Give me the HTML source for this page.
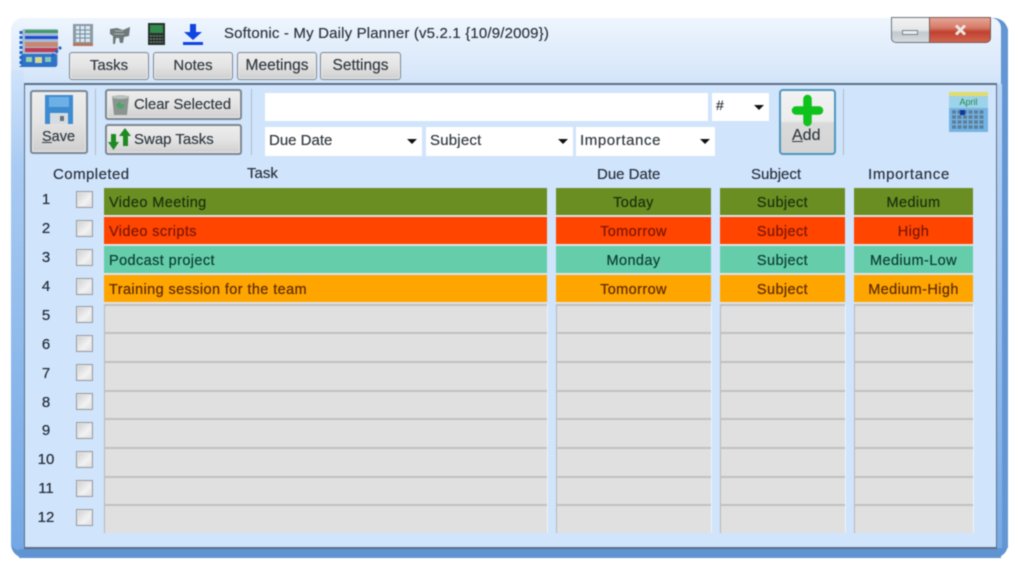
<!DOCTYPE html>
<html><head><meta charset="utf-8">
<style>
html,body{margin:0;padding:0;background:#fff}
#p{position:relative;width:1020px;height:574px;overflow:hidden;background:#fff;font-family:"Liberation Sans",sans-serif;color:#2b3440;font-size:15px;filter:blur(.45px)}
#p div,#p span.a,#p svg{position:absolute}
.t{white-space:nowrap;line-height:18px;text-shadow:0 0 .4px currentColor}
.btn{box-sizing:border-box;border:1px solid #7d8791;border-radius:3px;background:linear-gradient(#ededed 0,#e4e4e4 50%,#cfcfcf 100%);box-shadow:inset 0 0 0 1px #ebebeb;text-align:center;white-space:nowrap;color:#333c44;text-shadow:0 0 .4px currentColor}
.c{box-sizing:border-box;text-align:center;line-height:31px;height:27px;font-size:14.5px;letter-spacing:.4px;white-space:nowrap;box-shadow:0 1px 0 #eee5d5;text-shadow:0 0 .5px currentColor}
.l{box-sizing:border-box;padding-left:5px;line-height:31px;height:27px;font-size:14.5px;letter-spacing:.4px;white-space:nowrap;box-shadow:0 1px 0 #eee5d5;text-shadow:0 0 .5px currentColor}
.e{box-sizing:border-box;height:29px;background:#e0e0e0;border-top:2px solid #c0c0c0;border-left:1px solid #b8b8b8;box-shadow:1px 0 0 #ecf2f8}
.n{width:30px;text-align:center;left:31px;font-size:15px;line-height:18px;color:#26303c;text-shadow:0 0 .5px currentColor}
.k{box-sizing:border-box;left:76px;width:17px;height:17px;border:1px solid #959ba1;background:linear-gradient(135deg,#cfcfcf,#f2f2f2 60%,#dedede);box-shadow:inset 0 0 0 1px #e2e2e2}
.sel{background:#fff;box-sizing:border-box;height:29px;line-height:28px;font-size:15px;padding-left:4px;white-space:nowrap;color:#333c44;text-shadow:0 0 .4px currentColor}
.ar{width:0;height:0;border-left:5px solid transparent;border-right:5px solid transparent;border-top:5px solid #111}
.v{width:1px;background:#aebccb}
.u{text-decoration:underline}
</style></head><body>
<div id="p">
<!-- window -->
<div style="left:11px;top:18px;width:997px;height:540px;border-radius:14px;background:#5f93d2"></div>
<div style="left:11px;top:18px;width:990px;height:530px;border-radius:12px 10px 0 10px;background:linear-gradient(#eef5fd 0,#d6e6fa 60px,#cfe3fb 66px)"></div>
<div style="left:11px;top:70px;width:13px;height:480px;background:linear-gradient(#cfe3fb 0,#a9cbf3 20%,#8cb9ec 60%,#74a8e4 100%);border-radius:0 0 0 8px"></div>
<div style="left:24px;top:83px;width:973px;height:466px;box-sizing:border-box;border:1px solid #5d6f84;border-width:2px 1px 2px 1px;background:#d0e4fc"></div>
<div style="left:997px;top:84px;width:5px;height:464px;background:linear-gradient(#bcd6f6,#76a9e6)"></div>
<div style="left:1002px;top:26px;width:6px;height:522px;background:#6496d4;border-radius:0 4px 0 0"></div>
<div style="left:19px;top:549px;width:982px;height:9px;background:#5f93d2"></div>

<!-- caption buttons -->
<div style="left:891px;top:17px;width:38px;height:26px;box-sizing:border-box;border:1px solid #6d7680;border-right:0;border-radius:0 0 0 5px;background:linear-gradient(#f2f2f2,#e4e7e9 50%,#c3cad0 60%,#d5dade)"></div>
<div style="left:902px;top:30px;width:16px;height:5px;box-sizing:border-box;background:#e9edf0;border:1px solid #7a838c"></div>
<div style="left:929px;top:17px;width:62px;height:26px;box-sizing:border-box;border:1px solid #7c5a55;border-radius:0 0 5px 0;background:linear-gradient(#e6a596,#d67c69 40%,#c0422f 58%,#d06450)"></div>
<svg style="left:954px;top:24px" width="13" height="12" viewBox="0 0 13 12"><path d="M2 1.500L11 10.500M11 1.500L2 10.500" stroke="#ebe6e4" stroke-width="3"/></svg>

<!-- app icon -->
<svg style="left:19px;top:27px" width="44" height="44" viewBox="0 0 44 44">
<rect x="3" y="2" width="36" height="37" rx="2" fill="#a8bcd8"/>
<rect x="6" y="3" width="33" height="3" fill="#3f9a66"/>
<rect x="6" y="9" width="33" height="3" fill="#1e4fd0"/>
<rect x="6" y="15" width="33" height="5" fill="#c9876f"/>
<rect x="6" y="21" width="33" height="4" fill="#c03a52"/>
<rect x="2" y="27" width="36" height="13" rx="2" fill="#2f72c8"/>
<rect x="7" y="30" width="6" height="5" fill="#9bd0a8"/><rect x="16" y="30" width="7" height="6" fill="#d6d894"/><rect x="26" y="30" width="6" height="5" fill="#86c7b8"/>
<path d="M2 4v36M33 29L42 20" stroke="#1f66c2" stroke-width="3" fill="none" stroke-dasharray="3 2"/>
</svg>
<!-- toolbar icons -->
<svg style="left:72px;top:23px" width="22" height="24" viewBox="0 0 22 24"><rect x="1" y="1" width="20" height="22" fill="#8c9aa6"/><rect x="4" y="3" width="14" height="16" fill="#dbe6ee"/><path d="M4 7h14M4 11h14M4 15h14M8 3v16M13 3v16" stroke="#6f8aa0"/><rect x="1" y="20" width="20" height="3" fill="#b5765c"/></svg>
<svg style="left:109px;top:25px" width="22" height="20" viewBox="0 0 22 20"><path d="M1 4L8 3L14 5L21 2L20 11L15 12L14 18H11L10 13H7L6 19H4L4 11L1 9Z" fill="#6d7a78"/><path d="M6 6h8M5 9h10" stroke="#aab4b3"/></svg>
<svg style="left:148px;top:23px" width="17" height="22" viewBox="0 0 17 22"><rect width="17" height="22" fill="#26332c"/><rect x="2" y="2" width="13" height="8" fill="#2f8a4b"/><path d="M2 13h13M2 16h13M2 19h13" stroke="#8b8f8a" stroke-dasharray="2 1"/></svg>
<svg style="left:182px;top:23px" width="22" height="23" viewBox="0 0 22 23"><path d="M8 1h6v8h6L11 17L2 9h6z" fill="#1045e0"/><rect x="1" y="19" width="20" height="3" fill="#1045e0"/></svg>

<div class="t" style="left:224px;top:25px;font-size:15px;color:#2f3842;letter-spacing:.17px">Softonic - My Daily Planner (v5.2.1 {10/9/2009})</div>

<!-- tabs -->
<div class="btn" style="left:69px;top:52px;width:80px;height:28px;line-height:26px;font-size:15px">Tasks</div>
<div class="btn" style="left:153px;top:52px;width:80px;height:28px;line-height:26px;font-size:15px">Notes</div>
<div class="btn" style="left:237px;top:52px;width:80px;height:28px;line-height:26px;font-size:15.5px">Meetings</div>
<div class="btn" style="left:320px;top:52px;width:81px;height:28px;line-height:26px;font-size:15.5px">Settings</div>

<!-- save -->
<div class="btn" style="left:30px;top:90px;width:58px;height:64px;border-width:2px"></div>
<svg style="left:44px;top:95px" width="30" height="29" viewBox="0 0 30 29"><path d="M1 0h28v29H1z" fill="#3f8bd0"/><rect x="5" y="2" width="20" height="10" fill="#6cb0e6"/><rect x="6" y="18" width="18" height="11" fill="#d6dde2"/><rect x="16" y="21" width="4" height="5" fill="#67717a"/></svg>
<div class="t" style="left:42px;top:128px;font-size:14.5px;color:#333c44"><span class="u">S</span>ave</div>
<div class="v" style="left:95px;top:89px;height:66px"></div>

<!-- clear / swap -->
<div class="btn" style="left:105px;top:89px;width:137px;height:31px;border-width:2px"></div>
<svg style="left:111px;top:94px" width="19" height="22" viewBox="0 0 19 22"><path d="M1 2h17l-2 19H3z" fill="#8b9590"/><ellipse cx="9.500" cy="3" rx="8.500" ry="2" fill="#b9c2bc"/><path d="M5 11l4-4 1 3 4 1-3 4-4-1z" fill="#4ea36d"/></svg>
<div class="t" style="left:134px;top:96px;font-size:14.8px;color:#333c44">Clear Selected</div>
<div class="btn" style="left:105px;top:124px;width:137px;height:31px;border-width:2px"></div>
<svg style="left:108px;top:127px" width="24" height="24" viewBox="0 0 24 24"><path d="M3 7h5v8h3l-5.500 8L0 15h3z" fill="#1f8a24"/><path d="M17 1l6 8h-3v10h-5V9h-4z" fill="#1f8a24"/></svg>
<div class="t" style="left:134px;top:131px;font-size:15px;color:#333c44">Swap Tasks</div>
<div class="v" style="left:251px;top:89px;height:66px"></div>

<!-- inputs -->
<div style="left:265px;top:93px;width:443px;height:28px;background:#fff"></div>
<div class="sel" style="left:712px;top:93px;width:57px;height:28px;line-height:24px;font-size:14px">#</div>
<div class="ar" style="left:754px;top:105px"></div>
<div class="sel" style="left:265px;top:127px;width:157px">Due Date</div><div class="ar" style="left:407px;top:139px"></div>
<div class="sel" style="left:426px;top:127px;width:147px;letter-spacing:.2px">Subject</div><div class="ar" style="left:558px;top:139px"></div>
<div class="sel" style="left:576px;top:127px;width:139px;letter-spacing:.6px">Importance</div><div class="ar" style="left:700px;top:139px"></div>

<!-- add -->
<div style="left:779px;top:89px;width:57px;height:66px;box-sizing:border-box;border:2px solid #4f97bd;border-radius:4px;background:linear-gradient(#f2f2f2 0,#ececec 48%,#dadada 52%,#d4d4d4)"></div>
<svg style="left:791px;top:94px" width="33" height="33" viewBox="0 0 33 33"><path d="M16.500 5V28M5 16.500H28" stroke="#0fc21c" stroke-width="8.500" stroke-linecap="round"/></svg>
<div class="t" style="left:792px;top:127px;font-size:16px;color:#333c44"><span class="u">A</span>dd</div>
<div class="v" style="left:843px;top:89px;height:66px"></div>

<!-- calendar -->
<svg style="left:949px;top:92px" width="39" height="40" viewBox="0 0 39 40"><rect width="39" height="40" fill="#74b4e4"/><rect width="39" height="4" fill="#e3dc6a"/><rect y="4" width="39" height="12" fill="#9cd2ea"/><path d="M3 20h33M3 25h33M3 30h33M3 35h33" stroke="#5d7f9a" stroke-width="3.500" stroke-dasharray="4 1.500"/><rect x="11" y="18" width="5" height="5" fill="#10389a"/><text x="19.500" y="13" text-anchor="middle" font-size="9" font-family="Liberation Sans" fill="#1e8a45">April</text></svg>

<!-- headers -->
<div class="t" style="left:53px;top:166px;font-size:15px;letter-spacing:.45px">Completed</div>
<div class="t" style="left:247px;top:165px;font-size:15px">Task</div>
<div class="t" style="left:597px;top:166px;font-size:15px">Due Date</div>
<div class="t" style="left:751px;top:166px;font-size:15px">Subject</div>
<div class="t" style="left:868px;top:166px;font-size:15px;letter-spacing:.7px">Importance</div>

<!-- row numbers -->
<div class="n" style="top:191px">1</div><div class="n" style="top:220px">2</div><div class="n" style="top:249px">3</div><div class="n" style="top:278px">4</div><div class="n" style="top:307px">5</div><div class="n" style="top:336px">6</div><div class="n" style="top:365px">7</div><div class="n" style="top:394px">8</div><div class="n" style="top:422px">9</div><div class="n" style="top:451px">10</div><div class="n" style="top:480px">11</div><div class="n" style="top:509px">12</div>
<!-- checks -->
<div class="k" style="top:191px"></div><div class="k" style="top:220px"></div><div class="k" style="top:249px"></div><div class="k" style="top:278px"></div><div class="k" style="top:306px"></div><div class="k" style="top:335px"></div><div class="k" style="top:364px"></div><div class="k" style="top:393px"></div><div class="k" style="top:422px"></div><div class="k" style="top:451px"></div><div class="k" style="top:480px"></div><div class="k" style="top:509px"></div>

<!-- row 1 -->
<div class="l" style="left:104px;top:188px;width:443px;background:#6b8e23;color:#1a330c">Video Meeting</div>
<div class="c" style="left:556px;top:188px;width:155px;background:#6b8e23;color:#1a330c">Today</div>
<div class="c" style="left:720px;top:188px;width:125px;background:#6b8e23;color:#1a330c">Subject</div>
<div class="c" style="left:854px;top:188px;width:119px;background:#6b8e23;color:#1a330c">Medium</div>
<!-- row 2 -->
<div class="l" style="left:104px;top:217px;width:443px;background:#ff4500;color:#7e1606">Video scripts</div>
<div class="c" style="left:556px;top:217px;width:155px;background:#ff4500;color:#7e1606">Tomorrow</div>
<div class="c" style="left:720px;top:217px;width:125px;background:#ff4500;color:#7e1606">Subject</div>
<div class="c" style="left:854px;top:217px;width:119px;background:#ff4500;color:#7e1606">High</div>
<!-- row 3 -->
<div class="l" style="left:104px;top:246px;width:443px;background:#66cdaa;color:#0c4235">Podcast project</div>
<div class="c" style="left:556px;top:246px;width:155px;background:#66cdaa;color:#0c4235">Monday</div>
<div class="c" style="left:720px;top:246px;width:125px;background:#66cdaa;color:#0c4235">Subject</div>
<div class="c" style="left:854px;top:246px;width:119px;background:#66cdaa;color:#0c4235">Medium-Low</div>
<!-- row 4 -->
<div class="l" style="left:104px;top:275px;width:443px;background:#ffa500;color:#602c00">Training session for the team</div>
<div class="c" style="left:556px;top:275px;width:155px;background:#ffa500;color:#602c00">Tomorrow</div>
<div class="c" style="left:720px;top:275px;width:125px;background:#ffa500;color:#602c00">Subject</div>
<div class="c" style="left:854px;top:275px;width:119px;background:#ffa500;color:#602c00">Medium-High</div>

<!-- empty rows -->
<div class="e" style="left:104px;top:304px;width:443px"></div><div class="e" style="left:556px;top:304px;width:155px"></div><div class="e" style="left:720px;top:304px;width:125px"></div><div class="e" style="left:854px;top:304px;width:119px"></div>
<div class="e" style="left:104px;top:332px;width:443px"></div><div class="e" style="left:556px;top:332px;width:155px"></div><div class="e" style="left:720px;top:332px;width:125px"></div><div class="e" style="left:854px;top:332px;width:119px"></div>
<div class="e" style="left:104px;top:361px;width:443px"></div><div class="e" style="left:556px;top:361px;width:155px"></div><div class="e" style="left:720px;top:361px;width:125px"></div><div class="e" style="left:854px;top:361px;width:119px"></div>
<div class="e" style="left:104px;top:390px;width:443px"></div><div class="e" style="left:556px;top:390px;width:155px"></div><div class="e" style="left:720px;top:390px;width:125px"></div><div class="e" style="left:854px;top:390px;width:119px"></div>
<div class="e" style="left:104px;top:418px;width:443px"></div><div class="e" style="left:556px;top:418px;width:155px"></div><div class="e" style="left:720px;top:418px;width:125px"></div><div class="e" style="left:854px;top:418px;width:119px"></div>
<div class="e" style="left:104px;top:447px;width:443px"></div><div class="e" style="left:556px;top:447px;width:155px"></div><div class="e" style="left:720px;top:447px;width:125px"></div><div class="e" style="left:854px;top:447px;width:119px"></div>
<div class="e" style="left:104px;top:476px;width:443px"></div><div class="e" style="left:556px;top:476px;width:155px"></div><div class="e" style="left:720px;top:476px;width:125px"></div><div class="e" style="left:854px;top:476px;width:119px"></div>
<div class="e" style="left:104px;top:504px;width:443px"></div><div class="e" style="left:556px;top:504px;width:155px"></div><div class="e" style="left:720px;top:504px;width:125px"></div><div class="e" style="left:854px;top:504px;width:119px"></div>
</div>
</body></html>
